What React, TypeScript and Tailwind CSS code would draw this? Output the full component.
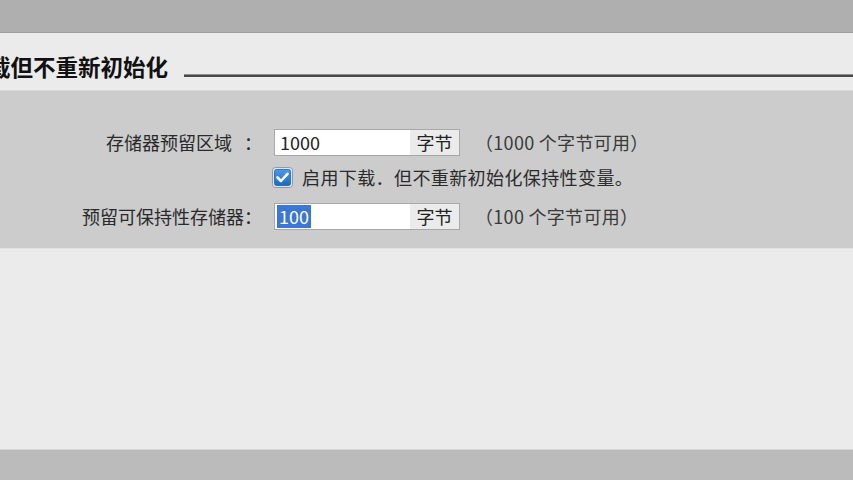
import React from 'react';

const font = "font-['Noto_Sans_CJK_SC','Noto_Sans',sans-serif]";

const CheckBox: React.FC = () => (
  <svg width="21" height="21" viewBox="0 0 21 21" className="shrink-0">
    <defs>
      <linearGradient id="cbFill" x1="0" y1="0" x2="0" y2="1">
        <stop offset="0" stopColor="#4d9ae6" />
        <stop offset="1" stopColor="#1b67c4" />
      </linearGradient>
    </defs>
    <rect x="0.5" y="0.5" width="20" height="20" rx="3" fill="#dfe6ee" stroke="#8c9aab" />
    <rect x="2.5" y="2.5" width="16" height="16" rx="2" fill="url(#cbFill)" stroke="#1a5fb5" strokeWidth="0.8" />
    <path d="M5.5 10.5 L9 14 L15.5 6.8" fill="none" stroke="#ffffff" strokeWidth="2.6" strokeLinecap="round" strokeLinejoin="round" />
  </svg>
);

interface FieldRowProps {
  label: React.ReactNode;
  value: string;
  selected?: boolean;
  hint: string;
}

const FieldRow: React.FC<FieldRowProps> = ({ label, value, selected, hint }) => (
  <div className="flex items-center h-[27px]">
    <div className="w-[274px] shrink-0 text-right pr-[12px] text-[18px] leading-[27px] text-[#2a2a2a] whitespace-nowrap">
      {label}
    </div>
    <div className="flex h-[27px] w-[186px] border border-[#a8a8a8] bg-white">
      <div className="flex items-center w-[135px] pl-[2px] text-[18px] text-[#222]">
        {selected ? (
          <span className="bg-[#3a77d6] text-white px-[2px] leading-[23px]">{value}</span>
        ) : (
          <span className="pl-[3px]">{value}</span>
        )}
      </div>
      <div className="flex-1 flex items-center justify-center bg-[#ebebeb] text-[18px] text-[#222]">
        字节
      </div>
    </div>
    <div className="ml-[15px] text-[18px] tracking-[0.3px] text-[#3a3a3a] whitespace-nowrap">{hint}</div>
  </div>
);

export default function App() {
  return (
    <div className={`w-[853px] h-[480px] flex flex-col overflow-hidden ${font}`}>
      <div className="h-[33px] shrink-0 bg-[#afafaf] border-b border-[#9d9d9d]" />

      <div className="h-[57px] shrink-0 bg-[#ebebeb] flex pt-[19px] overflow-hidden">
        <div className="ml-[-12px] text-[22.5px] font-bold leading-[28px] text-[#111] whitespace-nowrap">
          载但不重新初始化
        </div>
        <div className="flex-1 ml-[16px] mt-[22px] h-[3px] border-t border-[#8a8a8a] bg-[#4a4a4a]" />
      </div>

      <div className="h-[158px] shrink-0 bg-[#cccccc] border-t border-[#dadada] pt-[38px] flex flex-col">
        <FieldRow
          label={
            <>
              存储器预留区域<span className="ml-[12px]">：</span>
            </>
          }
          value="1000"
          hint="（1000 个字节可用）"
        />
        <div className="flex items-center h-[21px] mt-[11px] pl-[272px]">
          <CheckBox />
          <span className="ml-[9px] text-[18px] tracking-[0.4px] leading-[21px] text-[#2a2a2a] whitespace-nowrap">
            启用下载．但不重新初始化保持性变量。
          </span>
        </div>
        <div className="mt-[15px]">
          <FieldRow label="预留可保持性存储器：" value="100" selected hint="（100 个字节可用）" />
        </div>
      </div>

      <div className="flex-1 bg-[#ebebeb] border-t border-[#e2e2e2]" />
      <div className="h-[31px] shrink-0 bg-[#bbbbbb] border-t border-[#d6d6d6]" />
    </div>
  );
}
